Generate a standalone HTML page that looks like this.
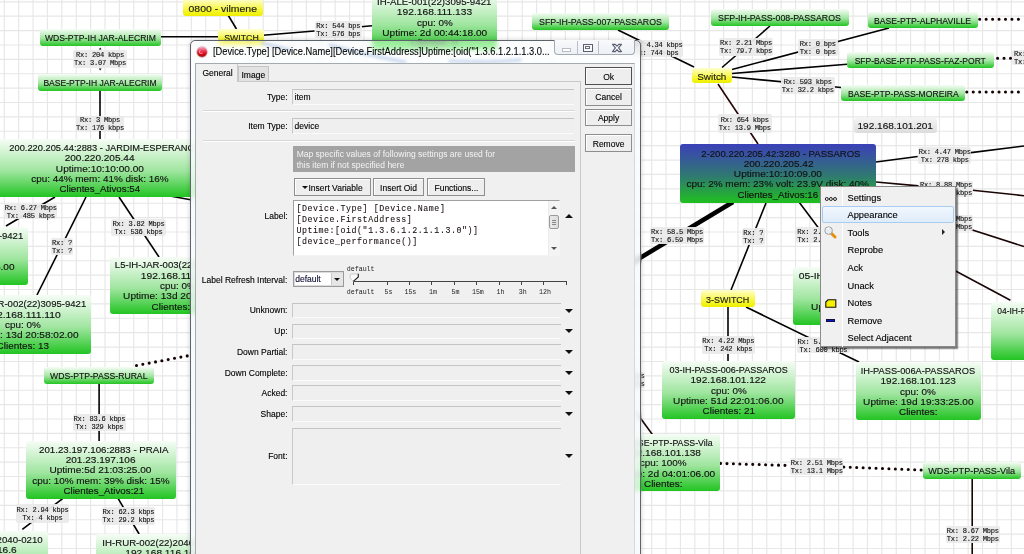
<!DOCTYPE html><html><head><meta charset="utf-8"><style>
*{margin:0;padding:0;box-sizing:border-box}
html,body{width:1024px;height:554px;overflow:hidden;background:#fff}
body{position:relative;font-family:"Liberation Sans",sans-serif}
.a{position:absolute}
.dev{will-change:transform;position:absolute;border-radius:3px;background:linear-gradient(#f6fdf6,#9fe59f 55%,#22c422);color:#111;font-size:9.4px;line-height:10.3px;text-align:center;white-space:nowrap;overflow:hidden}
.yel{will-change:transform;position:absolute;border-radius:3px;background:linear-gradient(#ffffd0,#f6f62a 70%,#eeee00);color:#222;font-size:9.4px;text-align:center;white-space:nowrap;overflow:hidden}
.ln{display:flex;justify-content:center;height:10.3px;white-space:nowrap}
.ln span{display:inline-block;transform-origin:50% 50%;-webkit-text-stroke:0.14px #111}
.lb{position:absolute;background:rgba(234,234,234,0.95);border-radius:2px;font-family:"Liberation Mono",monospace;font-size:7.1px;letter-spacing:-0.26px;line-height:8.0px;color:#111;white-space:pre;text-align:center;will-change:transform;-webkit-text-stroke:0.12px #111}
</style></head><body><svg class="a" style="left:0;top:0" width="1024" height="554" viewBox="0 0 1024 554"><path d="M4.30 0V554M18.69 0V554M33.07 0V554M47.46 0V554M61.84 0V554M76.23 0V554M90.62 0V554M105.00 0V554M119.39 0V554M133.77 0V554M148.16 0V554M162.55 0V554M176.93 0V554M191.32 0V554M205.70 0V554M220.09 0V554M234.48 0V554M248.86 0V554M263.25 0V554M277.63 0V554M292.02 0V554M306.41 0V554M320.79 0V554M335.18 0V554M349.56 0V554M363.95 0V554M378.34 0V554M392.72 0V554M407.11 0V554M421.49 0V554M435.88 0V554M450.27 0V554M464.65 0V554M479.04 0V554M493.42 0V554M507.81 0V554M522.20 0V554M536.58 0V554M550.97 0V554M565.35 0V554M579.74 0V554M594.13 0V554M608.51 0V554M622.90 0V554M637.28 0V554M651.67 0V554M666.06 0V554M680.44 0V554M694.83 0V554M709.21 0V554M723.60 0V554M737.99 0V554M752.37 0V554M766.76 0V554M781.14 0V554M795.53 0V554M809.92 0V554M824.30 0V554M838.69 0V554M853.07 0V554M867.46 0V554M881.85 0V554M896.23 0V554M910.62 0V554M925.00 0V554M939.39 0V554M953.78 0V554M968.16 0V554M982.55 0V554M996.93 0V554M1011.32 0V554M0 1.80H1024M0 16.19H1024M0 30.57H1024M0 44.96H1024M0 59.34H1024M0 73.73H1024M0 88.12H1024M0 102.50H1024M0 116.89H1024M0 131.27H1024M0 145.66H1024M0 160.05H1024M0 174.43H1024M0 188.82H1024M0 203.20H1024M0 217.59H1024M0 231.98H1024M0 246.36H1024M0 260.75H1024M0 275.13H1024M0 289.52H1024M0 303.91H1024M0 318.29H1024M0 332.68H1024M0 347.06H1024M0 361.45H1024M0 375.84H1024M0 390.22H1024M0 404.61H1024M0 418.99H1024M0 433.38H1024M0 447.77H1024M0 462.15H1024M0 476.54H1024M0 490.92H1024M0 505.31H1024M0 519.70H1024M0 534.08H1024M0 548.47H1024" stroke="#e7e7e7" stroke-width="1.15" fill="none"/><line x1="161" y1="36.8" x2="218" y2="36.8" stroke="#000" stroke-width="1.6"/><line x1="100" y1="91" x2="100" y2="139" stroke="#000" stroke-width="1.6"/><line x1="228" y1="15" x2="236.5" y2="29" stroke="#000" stroke-width="1.6"/><line x1="263" y1="35.2" x2="314.5" y2="31" stroke="#000" stroke-width="1.6"/><line x1="361" y1="26.8" x2="372" y2="25.8" stroke="#000" stroke-width="1.6"/><line x1="618" y1="30" x2="694" y2="67" stroke="#000" stroke-width="1.6"/><line x1="770" y1="26" x2="722" y2="67.5" stroke="#000" stroke-width="1.6"/><line x1="889" y1="28" x2="732" y2="69.5" stroke="#000" stroke-width="1.6"/><line x1="732" y1="73.5" x2="847" y2="64.2" stroke="#000" stroke-width="1.6"/><line x1="732" y1="77" x2="841" y2="87.5" stroke="#000" stroke-width="1.6"/><line x1="718" y1="84" x2="758" y2="144" stroke="#2a0505" stroke-width="1.6"/><line x1="876" y1="162" x2="917.7" y2="156.5" stroke="#000" stroke-width="1.6"/><line x1="971" y1="152.6" x2="1024" y2="146" stroke="#000" stroke-width="1.6"/><line x1="876" y1="182" x2="918.5" y2="185.9" stroke="#1a0505" stroke-width="1.6"/><line x1="972.6" y1="190.2" x2="1024" y2="195.7" stroke="#1a0505" stroke-width="1.6"/><line x1="876" y1="199" x2="1024" y2="246.6" stroke="#1a0505" stroke-width="1.6"/><line x1="850" y1="214.5" x2="1010.4" y2="300.3" stroke="#1a0505" stroke-width="1.6"/><line x1="746" y1="307" x2="859" y2="362" stroke="#000" stroke-width="1.6"/><line x1="766" y1="203" x2="731" y2="290" stroke="#000" stroke-width="1.6"/><line x1="799" y1="202" x2="847" y2="266" stroke="#000" stroke-width="1.6"/><line x1="733" y1="202" x2="630" y2="264" stroke="#000" stroke-width="4.5"/><line x1="728" y1="307" x2="728" y2="361.6" stroke="#000" stroke-width="1.6"/><line x1="972.2" y1="479" x2="972.2" y2="554" stroke="#1a0505" stroke-width="1.6"/><line x1="55" y1="197" x2="6" y2="226" stroke="#000" stroke-width="1.6"/><line x1="86" y1="197" x2="37" y2="295" stroke="#000" stroke-width="1.6"/><line x1="119" y1="197" x2="159" y2="257" stroke="#000" stroke-width="1.6"/><line x1="170" y1="196" x2="192" y2="200" stroke="#000" stroke-width="1.6"/><line x1="99.1" y1="384" x2="99.1" y2="441" stroke="#000" stroke-width="1.6"/><line x1="62.6" y1="498.7" x2="22.3" y2="529.3" stroke="#000" stroke-width="1.6"/><line x1="118.2" y1="498.7" x2="139.1" y2="534" stroke="#000" stroke-width="1.6"/><line x1="636" y1="412" x2="660" y2="445" stroke="#1a0505" stroke-width="1.6"/><line x1="979.7" y1="19.3" x2="1024" y2="19.3" stroke="#140404" stroke-width="3.1" stroke-linecap="round" stroke-dasharray="0 6.45"/><line x1="997.6" y1="58.3" x2="1012" y2="58.3" stroke="#140404" stroke-width="3.1" stroke-linecap="round" stroke-dasharray="0 6.45"/><line x1="966.8" y1="92" x2="1024" y2="92" stroke="#140404" stroke-width="3.1" stroke-linecap="round" stroke-dasharray="0 6.45"/><line x1="720.5" y1="463.4" x2="790" y2="465.5" stroke="#140404" stroke-width="3.1" stroke-linecap="round" stroke-dasharray="0 6.45"/><line x1="843.8" y1="467" x2="923" y2="470" stroke="#140404" stroke-width="3.1" stroke-linecap="round" stroke-dasharray="0 6.45"/><line x1="136.5" y1="365.5" x2="192" y2="355" stroke="#140404" stroke-width="3.1" stroke-linecap="round" stroke-dasharray="0 6.45"/><path d="M98.8 49.6 L100.2 47.6 L101.6 49.6 Z M98.8 68.6 L100.2 70.6 L101.6 68.6 Z" fill="#111"/></svg><div class="dev" style="left:40.0px;top:28.7px;width:121.0px;height:16.6px;"><div style="position:absolute;left:0;right:0;top:4.0px"><div class="ln"><span style="transform:translateX(0.00px) scaleX(0.919)">WDS-PTP-IH JAR-ALECRIM</span></div></div></div><div class="dev" style="left:37.7px;top:74.0px;width:124.3px;height:17.0px;"><div style="position:absolute;left:0;right:0;top:4.2px"><div class="ln"><span style="transform:translateX(0.00px) scaleX(0.913)">BASE-PTP-IH JAR-ALECRIM</span></div></div></div><div class="dev" style="left:531.7px;top:13.1px;width:137.3px;height:17.1px;"><div style="position:absolute;left:0;right:0;top:4.2px"><div class="ln"><span style="transform:translateX(0.00px) scaleX(0.938)">SFP-IH-PASS-007-PASSAROS</span></div></div></div><div class="dev" style="left:711.2px;top:9.4px;width:137.7px;height:16.8px;"><div style="position:absolute;left:0;right:0;top:4.1px"><div class="ln"><span style="transform:translateX(0.00px) scaleX(0.938)">SFP-IH-PASS-008-PASSAROS</span></div></div></div><div class="dev" style="left:867.6px;top:11.8px;width:110.0px;height:16.0px;"><div style="position:absolute;left:0;right:0;top:3.7px"><div class="ln"><span style="transform:translateX(0.00px) scaleX(0.925)">BASE-PTP-ALPHAVILLE</span></div></div></div><div class="dev" style="left:847.3px;top:52.3px;width:146.9px;height:16.3px;"><div style="position:absolute;left:0;right:0;top:3.8px"><div class="ln"><span style="transform:translateX(0.00px) scaleX(0.908)">SFP-BASE-PTP-PASS-FAZ-PORT</span></div></div></div><div class="dev" style="left:841.4px;top:84.8px;width:124.1px;height:16.2px;"><div style="position:absolute;left:0;right:0;top:3.8px"><div class="ln"><span style="transform:translateX(0.00px) scaleX(0.918)">BASE-PTP-PASS-MOREIRA</span></div></div></div><div class="dev" style="left:44.2px;top:367.2px;width:109.5px;height:16.5px;"><div style="position:absolute;left:0;right:0;top:3.9px"><div class="ln"><span style="transform:translateX(0.00px) scaleX(0.922)">WDS-PTP-PASS-RURAL</span></div></div></div><div class="dev" style="left:923.2px;top:462.1px;width:97.7px;height:16.5px;"><div style="position:absolute;left:0;right:0;top:3.9px"><div class="ln"><span style="transform:translateX(0.00px) scaleX(0.972)">WDS-PTP-PASS-Vila</span></div></div></div><div class="yel" style="left:183.2px;top:-1.0px;width:79.8px;height:17.1px;"><div style="position:absolute;left:0;right:0;top:3.7px"><div class="ln"><span style="transform:translateX(0.00px) scaleX(1.113)">0800 - vilmene</span></div></div></div><div class="yel" style="left:217.6px;top:28.6px;width:46.1px;height:15.8px;"><div style="position:absolute;left:0;right:0;top:3.0px"><div class="ln"><span style="transform:translateX(0.00px) scaleX(0.931)">SWITCH</span></div></div></div><div class="yel" style="left:692.3px;top:68.4px;width:40.0px;height:15.4px;"><div style="position:absolute;left:0;right:0;top:2.8px"><div class="ln"><span style="transform:translateX(0.00px) scaleX(1.051)">Switch</span></div></div></div><div class="yel" style="left:701.2px;top:290.1px;width:54.1px;height:16.8px;"><div style="position:absolute;left:0;right:0;top:3.5px"><div class="ln"><span style="transform:translateX(0.00px) scaleX(0.953)">3-SWITCH</span></div></div></div><div class="dev" style="left:853.7px;top:118.0px;width:83.3px;height:15.1px;background:linear-gradient(#f4f4f4,#dcdcdc);"><div style="position:absolute;left:0;right:0;top:3.2px"><div class="ln"><span style="transform:translateX(0.00px) scaleX(1.071)">192.168.101.201</span></div></div></div><div class="dev" style="left:371.7px;top:-6.6px;width:124.9px;height:58.0px;"><div style="position:absolute;left:0;right:0;top:4.1px"><div class="ln"><span style="transform:translateX(0.00px) scaleX(1.035)">IH-ALE-001(22)3095-9421</span></div><div class="ln"><span style="transform:translateX(0.00px) scaleX(1.093)">192.168.111.133</span></div><div class="ln"><span style="transform:translateX(0.00px) scaleX(1.052)">cpu: 0%</span></div><div class="ln"><span style="transform:translateX(0.00px) scaleX(1.076)">Uptime: 2d 00:44:18.00</span></div><div class="ln"><span style="transform:translateX(0.00px) scaleX(1.055)">Clientes: 0</span></div></div></div><div class="dev" style="left:-5.0px;top:139.2px;width:210.0px;height:58.1px;"><div style="position:absolute;left:0;right:0;top:4.2px"><div class="ln"><span style="transform:translateX(1.50px) scaleX(0.991)">200.220.205.44:2883 - JARDIM-ESPERANC</span></div><div class="ln"><span style="transform:translateX(0.00px) scaleX(1.071)">200.220.205.44</span></div><div class="ln"><span style="transform:translateX(0.00px) scaleX(1.077)">Uptime:10:10:00.00</span></div><div class="ln"><span style="transform:translateX(0.00px) scaleX(1.059)">cpu: 44% mem: 41% disk: 16%</span></div><div class="ln"><span style="transform:translateX(0.00px) scaleX(1.040)">Clientes_Ativos:54</span></div></div></div><div class="dev" style="left:-108.7px;top:227.0px;width:137.2px;height:57.8px;"><div style="position:absolute;left:0;right:0;top:4.0px"><div class="ln"><span style="transform:translateX(0.00px) scaleX(1.019)">L5-IH-JAR-001(22)3095-9421</span></div><div class="ln"><span style="transform:translateX(0.00px) scaleX(1.000)"></span></div><div class="ln"><span style="transform:translateX(0.00px) scaleX(1.000)"></span></div><div class="ln"><span style="transform:translateX(0.00px) scaleX(1.076)">Uptime: 13d 20:58:05.00</span></div><div class="ln"><span style="transform:translateX(0.00px) scaleX(1.000)"></span></div></div></div><div class="dev" style="left:-44.0px;top:295.2px;width:134.5px;height:58.6px;"><div style="position:absolute;left:0;right:0;top:4.4px"><div class="ln"><span style="transform:translateX(0.00px) scaleX(1.019)">L5-IH-JAR-002(22)3095-9421</span></div><div class="ln"><span style="transform:translateX(0.00px) scaleX(1.104)">192.168.111.110</span></div><div class="ln"><span style="transform:translateX(0.00px) scaleX(1.052)">cpu: 0%</span></div><div class="ln"><span style="transform:translateX(0.00px) scaleX(1.076)">Uptime: 13d 20:58:02.00</span></div><div class="ln"><span style="transform:translateX(0.00px) scaleX(1.056)">Clientes: 13</span></div></div></div><div class="dev" style="left:109.8px;top:257.0px;width:136.4px;height:56.6px;"><div style="position:absolute;left:0;right:0;top:3.4px"><div class="ln"><span style="transform:translateX(0.00px) scaleX(1.019)">L5-IH-JAR-003(22)3095-9421</span></div><div class="ln"><span style="transform:translateX(0.00px) scaleX(1.093)">192.168.111.120</span></div><div class="ln"><span style="transform:translateX(0.00px) scaleX(1.052)">cpu: 0%</span></div><div class="ln"><span style="transform:translateX(0.00px) scaleX(1.076)">Uptime: 13d 20:58:02.00</span></div><div class="ln"><span style="transform:translateX(0.00px) scaleX(1.056)">Clientes: 13</span></div></div></div><div class="dev" style="left:25.8px;top:441.2px;width:149.7px;height:57.5px;"><div style="position:absolute;left:0;right:0;top:3.9px"><div class="ln"><span style="transform:translateX(3.20px) scaleX(1.035)">201.23.197.106:2883 - PRAIA</span></div><div class="ln"><span style="transform:translateX(0.00px) scaleX(1.071)">201.23.197.106</span></div><div class="ln"><span style="transform:translateX(0.00px) scaleX(1.076)">Uptime:5d 21:03:25.00</span></div><div class="ln"><span style="transform:translateX(0.00px) scaleX(1.059)">cpu: 10% mem: 39% disk: 15%</span></div><div class="ln"><span style="transform:translateX(3.00px) scaleX(1.040)">Clientes_Ativos:21</span></div></div></div><div class="dev" style="left:-79.5px;top:530.7px;width:126.8px;height:57.7px;"><div style="position:absolute;left:0;right:0;top:3.9px"><div class="ln"><span style="transform:translateX(0.00px) scaleX(1.029)">IH-RUR-001(22)2040-0210</span></div><div class="ln"><span style="transform:translateX(0.00px) scaleX(1.084)">192.168.116.6</span></div><div class="ln"><span style="transform:translateX(0.00px) scaleX(1.052)">cpu: 0%</span></div><div class="ln"><span style="transform:translateX(0.00px) scaleX(1.075)">Uptime: 1d</span></div><div class="ln"><span style="transform:translateX(0.00px) scaleX(1.055)">Clientes: 0</span></div></div></div><div class="dev" style="left:96.0px;top:534.0px;width:129.0px;height:57.7px;"><div style="position:absolute;left:0;right:0;top:4.0px"><div class="ln"><span style="transform:translateX(0.00px) scaleX(1.029)">IH-RUR-002(22)2040-0210</span></div><div class="ln"><span style="transform:translateX(0.00px) scaleX(1.083)">192.168.116.10</span></div><div class="ln"><span style="transform:translateX(0.00px) scaleX(1.052)">cpu: 0%</span></div><div class="ln"><span style="transform:translateX(0.00px) scaleX(1.075)">Uptime: 1d</span></div><div class="ln"><span style="transform:translateX(0.00px) scaleX(1.055)">Clientes: 0</span></div></div></div><div class="dev" style="left:679.6px;top:144.2px;width:196.2px;height:58.7px;background:linear-gradient(#3b40b8,#2f7a70 55%,#20c020);"><div style="position:absolute;left:0;right:0;top:4.5px"><div class="ln"><span style="transform:translateX(2.80px) scaleX(1.019)">2-200.220.205.42:3280 - PASSAROS</span></div><div class="ln"><span style="transform:translateX(0.00px) scaleX(1.071)">200.220.205.42</span></div><div class="ln"><span style="transform:translateX(0.00px) scaleX(1.077)">Uptime:10:10:09.00</span></div><div class="ln"><span style="transform:translateX(0.00px) scaleX(1.064)">cpu: 2% mem: 23% volt: 23.9V disk: 40%</span></div><div class="ln"><span style="transform:translateX(0.00px) scaleX(1.040)">Clientes_Ativos:16</span></div></div></div><div class="dev" style="left:793.2px;top:266.6px;width:147.0px;height:57.9px;"><div style="position:absolute;left:0;right:0;top:4.0px"><div class="ln"><span style="transform:translateX(0.00px) scaleX(1.102)">05-IH-PASS-005-PASSAROS</span></div><div class="ln"><span style="transform:translateX(0.00px) scaleX(1.071)">192.168.101.125</span></div><div class="ln"><span style="transform:translateX(0.00px) scaleX(1.052)">cpu: 0%</span></div><div class="ln"><span style="transform:translateX(0.00px) scaleX(1.076)">Uptime: 19d 19:33:25.00</span></div><div class="ln"><span style="transform:translateX(0.00px) scaleX(1.051)">Clientes:</span></div></div></div><div class="dev" style="left:661.8px;top:361.0px;width:132.9px;height:58.0px;"><div style="position:absolute;left:0;right:0;top:4.1px"><div class="ln"><span style="transform:translateX(0.00px) scaleX(0.961)">03-IH-PASS-006-PASSAROS</span></div><div class="ln"><span style="transform:translateX(0.00px) scaleX(1.071)">192.168.101.122</span></div><div class="ln"><span style="transform:translateX(0.00px) scaleX(1.052)">cpu: 0%</span></div><div class="ln"><span style="transform:translateX(0.00px) scaleX(1.076)">Uptime: 51d 22:01:06.00</span></div><div class="ln"><span style="transform:translateX(0.00px) scaleX(1.056)">Clientes: 21</span></div></div></div><div class="dev" style="left:605.7px;top:433.5px;width:114.4px;height:57.3px;"><div style="position:absolute;left:0;right:0;top:3.8px"><div class="ln"><span style="transform:translateX(0.00px) scaleX(0.936)">L5-BASE-PTP-PASS-Vila</span></div><div class="ln"><span style="transform:translateX(0.00px) scaleX(1.071)">192.168.101.138</span></div><div class="ln"><span style="transform:translateX(0.00px) scaleX(1.056)">cpu: 100%</span></div><div class="ln"><span style="transform:translateX(0.00px) scaleX(1.076)">Uptime: 2d 04:01:06.00</span></div><div class="ln"><span style="transform:translateX(0.00px) scaleX(1.051)">Clientes:</span></div></div></div><div class="dev" style="left:990.8px;top:301.8px;width:182.0px;height:58.2px;"><div style="position:absolute;left:0;right:0;top:4.2px"><div class="ln"><span style="transform:translateX(0.00px) scaleX(0.901)">04-IH-PASS-004-PASSAROS-CONDOMINIO</span></div><div class="ln"><span style="transform:translateX(0.00px) scaleX(1.071)">192.168.101.124</span></div><div class="ln"><span style="transform:translateX(0.00px) scaleX(1.052)">cpu: 0%</span></div><div class="ln"><span style="transform:translateX(0.00px) scaleX(1.076)">Uptime: 19d 19:33:25.00</span></div><div class="ln"><span style="transform:translateX(0.00px) scaleX(1.051)">Clientes:</span></div></div></div><div class="dev" style="left:856.0px;top:362.4px;width:124.7px;height:57.7px;"><div style="position:absolute;left:0;right:0;top:4.0px"><div class="ln"><span style="transform:translateX(0.00px) scaleX(0.987)">IH-PASS-006A-PASSAROS</span></div><div class="ln"><span style="transform:translateX(0.00px) scaleX(1.071)">192.168.101.123</span></div><div class="ln"><span style="transform:translateX(0.00px) scaleX(1.052)">cpu: 0%</span></div><div class="ln"><span style="transform:translateX(0.00px) scaleX(1.076)">Uptime: 19d 19:33:25.00</span></div><div class="ln"><span style="transform:translateX(0.00px) scaleX(1.051)">Clientes:</span></div></div></div><div class="lb" style="left:73.0px;top:50.0px;width:54.0px;height:18.0px;padding-top:1.4px">Rx: 204 kbps
Tx: 3.07 Mbps</div><div class="lb" style="left:75.9px;top:116.4px;width:48.0px;height:15.2px;padding-top:-0.0px">Rx: 3 Mbps
Tx: 176 kbps</div><div class="lb" style="left:314.5px;top:20.6px;width:46.5px;height:16.9px;padding-top:0.8px">Rx: 544 bps
Tx: 576 bps</div><div class="lb" style="left:630.0px;top:40.0px;width:53.0px;height:16.6px;padding-top:0.7px">Rx: 4.34 kbps
Tx: 744 bps</div><div class="lb" style="left:718.8px;top:37.7px;width:54.2px;height:17.9px;padding-top:1.3px">Rx: 2.21 Mbps
Tx: 79.7 kbps</div><div class="lb" style="left:797.5px;top:39.4px;width:39.5px;height:16.8px;padding-top:0.8px">Rx: 0 bps
Tx: 0 bps</div><div class="lb" style="left:1011.9px;top:50.4px;width:40.1px;height:15.0px;padding-top:-0.1px">Rx: 0 bps
Tx: 0 bps</div><div class="lb" style="left:780.6px;top:76.6px;width:53.7px;height:16.6px;padding-top:0.7px">Rx: 593 kbps
Tx: 32.2 kbps</div><div class="lb" style="left:718.2px;top:114.4px;width:53.7px;height:18.5px;padding-top:1.6px">Rx: 654 kbps
Tx: 13.9 Mbps</div><div class="lb" style="left:917.7px;top:147.4px;width:53.4px;height:16.5px;padding-top:0.7px">Rx: 4.47 Mbps
Tx: 278 kbps</div><div class="lb" style="left:918.5px;top:180.7px;width:54.1px;height:15.9px;padding-top:0.4px">Rx: 8.88 Mbps
Tx: 8.88 kbps</div><div class="lb" style="left:918.5px;top:215.3px;width:54.1px;height:15.9px;padding-top:0.3px">Rx: 1.22 Mbps
Tx: 3.22 Mbps</div><div class="lb" style="left:650.3px;top:227.0px;width:54.1px;height:17.1px;padding-top:0.9px">Rx: 58.5 Mbps
Tx: 6.59 Mbps</div><div class="lb" style="left:741.8px;top:227.9px;width:22.7px;height:17.1px;padding-top:0.9px">Rx: ?
Tx: ?</div><div class="lb" style="left:795.6px;top:226.5px;width:54.4px;height:16.3px;padding-top:0.6px">Rx: 2.41 Mbps
Tx: 2.41 Mbps</div><div class="lb" style="left:701.5px;top:335.5px;width:52.7px;height:17.5px;padding-top:1.1px">Rx: 4.22 Mbps
Tx: 242 kbps</div><div class="lb" style="left:797.2px;top:336.7px;width:52.8px;height:16.3px;padding-top:0.6px">Rx: 5.42 Mbps
Tx: 600 kbps</div><div class="lb" style="left:790.4px;top:458.2px;width:53.4px;height:16.5px;padding-top:0.7px">Rx: 2.51 Mbps
Tx: 13.1 Mbps</div><div class="lb" style="left:945.6px;top:525.7px;width:53.6px;height:16.8px;padding-top:0.8px">Rx: 8.67 Mbps
Tx: 2.22 Mbps</div><div class="lb" style="left:4.0px;top:204.4px;width:53.4px;height:15.4px;padding-top:0.1px">Rx: 6.27 Mbps
Tx: 485 kbps</div><div class="lb" style="left:51.0px;top:237.8px;width:22.1px;height:17.2px;padding-top:1.0px">Rx: ?
Tx: ?</div><div class="lb" style="left:111.2px;top:218.8px;width:55.0px;height:16.8px;padding-top:0.8px">Rx: 3.82 Mbps
Tx: 536 kbps</div><div class="lb" style="left:72.9px;top:413.9px;width:52.8px;height:17.3px;padding-top:1.1px">Rx: 83.6 kbps
Tx: 329 kbps</div><div class="lb" style="left:15.9px;top:504.4px;width:53.1px;height:19.0px;padding-top:1.9px">Rx: 2.94 kbps
Tx: 4 kbps</div><div class="lb" style="left:102.4px;top:506.6px;width:52.8px;height:17.8px;padding-top:1.3px">Rx: 62.3 kbps
Tx: 29.2 kbps</div><div class="lb" style="left:596.0px;top:372.0px;width:49.0px;height:16.0px;padding-top:0.4px">Rx: 1.2 kbps
Tx: 2.1 kbps</div><div class="a" style="left:189.6px;top:40.3px;width:451.9px;height:520.0px;border:1px solid #5d636b;border-radius:5px 5px 0 0;background:linear-gradient(180deg,rgba(250,252,253,0.5),rgba(252,253,254,0.8) 12px,rgba(252,253,254,0.88) 22px,rgba(248,251,252,0.84) 60px,rgba(246,250,251,0.82));-webkit-backdrop-filter:blur(2.5px) saturate(1.4);backdrop-filter:blur(2.5px) saturate(1.4);box-shadow:0 0 5px rgba(0,0,0,0.2)"></div><svg class="a" style="left:190px;top:41px" width="450" height="22" viewBox="0 0 450 22"><defs><filter id="bl" x="-20%" y="-50%" width="140%" height="200%"><feGaussianBlur stdDeviation="1.6"/></filter></defs><g filter="url(#bl)" stroke="rgba(120,160,215,0.45)" stroke-width="2.6" fill="none" stroke-linecap="round"><path d="M72 2 L100 9"/><path d="M140 4 Q175 14 215 21"/><path d="M260 20 Q300 22 330 19"/></g></svg><div class="a" style="left:196.9px;top:46.9px;width:10.0px;height:10.0px;border-radius:50%;background:linear-gradient(#f6a8c0,#ec3a5a 40%,#e0081a 65%,#9a1008);box-shadow:0 0 1px 0.5px rgba(60,0,0,0.45)"><div class="a" style="left:2.6px;top:3.4px;width:4px;height:4px;border-radius:50%;border-left:1px solid rgba(255,220,220,0.7);border-bottom:1px solid rgba(255,220,220,0.7)"></div></div><div class="a" style="left:213.0px;top:45.6px;white-space:nowrap;font-size:10px;line-height:12px;color:#000;transform:scaleX(0.93);transform-origin:0 0;-webkit-text-stroke:0.1px #000">[Device.Type] [Device.Name][Device.FirstAddress]Uptime:[oid(&quot;1.3.6.1.2.1.1.3.0...</div><div class="a" style="left:554.4px;top:40.2px;width:81.1px;height:15.1px;border:1px solid #a3abb4;border-top:none;border-radius:0 0 4px 4px;background:linear-gradient(#f8fafc,#edf1f5)"></div><div class="a" style="left:576.6px;top:40.5px;width:1.0px;height:14.6px;background:#b8bfc7"></div><div class="a" style="left:598.4px;top:40.5px;width:1.0px;height:14.6px;background:#b8bfc7"></div><div class="a" style="left:561.5px;top:48.2px;width:9.0px;height:3.4px;border:1px solid #b8bcc4;background:#fff"></div><div class="a" style="left:582.6px;top:43.8px;width:10.4px;height:8.2px;border:1.7px solid #5c6070;background:#f8f9fb"><div class="a" style="left:1px;top:0.9px;width:5px;height:3.2px;border:1px solid #6a6e7c"></div></div><svg class="a" style="left:611px;top:43px" width="12" height="10" viewBox="0 0 12 10"><path d="M1.5 1.3 L4.3 1.3 L6 3.1 L7.7 1.3 L10.5 1.3 L7.6 4.9 L10.5 8.6 L7.7 8.6 L6 6.7 L4.3 8.6 L1.5 8.6 L4.4 4.9 Z" fill="#f3f4f7" stroke="#5d6172" stroke-width="1.15" stroke-linejoin="round"/></svg><div class="a" style="left:195.3px;top:63.3px;width:440.2px;height:500.0px;background:#f0f0f0;border-top:1px solid #a5aaaf;border-left:1px solid #a5aaaf;border-right:1px solid #d5d9dd"></div><div class="a" style="left:237.5px;top:66.0px;width:31.7px;height:15.5px;background:#e2e2e2;border:1px solid #c5c5c5;border-bottom:none"></div><div class="a" style="left:196.3px;top:64.2px;width:41.5px;height:17.5px;background:#f0f0f0;border-right:1px solid #c9c9c9"></div><div class="a" style="left:202.5px;top:68.4px;white-space:nowrap;font-size:8.5px;line-height:11px;color:#000;-webkit-text-stroke:0.12px #000">General</div><div class="a" style="left:241.5px;top:69.9px;white-space:nowrap;font-size:8.5px;line-height:11px;color:#000;-webkit-text-stroke:0.12px #000">Image</div><div class="a" style="left:237.5px;top:81.2px;width:343.5px;height:1.0px;background:#c9c9c9"></div><div class="a" style="left:580.3px;top:81.2px;width:1.0px;height:480.0px;background:#c9c9c9"></div><div class="a" style="left:167.7px;top:91.6px;width:120.0px;text-align:right;white-space:nowrap;font-size:8.5px;line-height:11px;color:#000;-webkit-text-stroke:0.12px #000">Type:</div><div class="a" style="left:292.4px;top:89.3px;width:282.1px;height:15.4px;background:#efefef;border-top:1.2px solid #c4c4c4;border-left:1.2px solid #c8c8c8;border-bottom:1px solid #fbfbfb"></div><div class="a" style="left:294.6px;top:91.7px;white-space:nowrap;font-size:8.5px;line-height:11px;color:#000;-webkit-text-stroke:0.12px #000">item</div><div class="a" style="left:203.0px;top:110.3px;width:371.5px;height:1.0px;background:#d7d7d7;border-bottom:1px solid #fff;height:2px"></div><div class="a" style="left:167.7px;top:120.7px;width:120.0px;text-align:right;white-space:nowrap;font-size:8.5px;line-height:11px;color:#000;-webkit-text-stroke:0.12px #000">Item Type:</div><div class="a" style="left:292.4px;top:118.0px;width:282.1px;height:15.5px;background:#efefef;border-top:1.2px solid #c4c4c4;border-left:1.2px solid #c8c8c8;border-bottom:1px solid #fbfbfb"></div><div class="a" style="left:294.6px;top:120.5px;white-space:nowrap;font-size:8.5px;line-height:11px;color:#000;-webkit-text-stroke:0.12px #000">device</div><div class="a" style="left:203.0px;top:139.6px;width:371.5px;height:2.0px;background:#d7d7d7;border-bottom:1px solid #fff"></div><div class="a" style="left:292.9px;top:146.3px;width:281.7px;height:25.5px;background:#a3a3a3"></div><div class="a" style="left:296.7px;top:149.2px;white-space:nowrap;font-size:8.5px;line-height:10.2px;color:#f4f4f4">Map specific values of following settings are used for</div><div class="a" style="left:296.7px;top:160.2px;white-space:nowrap;font-size:8.5px;line-height:10.2px;color:#f4f4f4">this item if not specified here</div><div class="a" style="left:294.4px;top:178.2px;width:76.4px;height:18.0px;border:1px solid #8e8e8e;background:#eeeeee;box-shadow:inset 1px 1px 0 #fff"></div><div class="a" style="left:308.5px;top:183.0px;white-space:nowrap;font-size:8.5px;line-height:11px;color:#000;-webkit-text-stroke:0.12px #000">Insert Variable</div><div class="a" style="left:301.5px;top:186px;width:0;height:0;border-left:3.2px solid transparent;border-right:3.2px solid transparent;border-top:3.6px solid #111"></div><div class="a" style="left:373.0px;top:178.2px;width:51.1px;height:18.0px;border:1px solid #8e8e8e;background:#eeeeee;box-shadow:inset 1px 1px 0 #fff"></div><div class="a" style="left:373.0px;top:182.6px;width:51.1px;text-align:center;white-space:nowrap;font-size:8.5px;line-height:11px;color:#000;-webkit-text-stroke:0.12px #000">Insert Oid</div><div class="a" style="left:427.4px;top:178.2px;width:58.1px;height:18.0px;border:1px solid #8e8e8e;background:#eeeeee;box-shadow:inset 1px 1px 0 #fff"></div><div class="a" style="left:427.4px;top:182.6px;width:58.1px;text-align:center;white-space:nowrap;font-size:8.5px;line-height:11px;color:#000;-webkit-text-stroke:0.12px #000">Functions...</div><div class="a" style="left:167.7px;top:211.2px;width:120.0px;text-align:right;white-space:nowrap;font-size:8.5px;line-height:11px;color:#000;-webkit-text-stroke:0.12px #000">Label:</div><div class="a" style="left:292.9px;top:199.6px;width:267.6px;height:56.0px;background:#fff;border-top:1.4px solid #a0a0a0;border-left:1.4px solid #a0a0a0;border-right:1px solid #e8e8e8;border-bottom:1px solid #f4f4f4"></div><div class="a" style="left:296.4px;top:202.8px;white-space:pre;font-family:'Liberation Mono',monospace;font-size:8.3px;letter-spacing:0.54px;line-height:11.2px;color:#1a1010;-webkit-text-stroke:0.08px #1a1010">[Device.Type] [Device.Name]
[Device.FirstAddress]
Uptime:[oid("1.3.6.1.2.1.1.3.0")]
[device_performance()]</div><div class="a" style="left:548.0px;top:201.0px;width:12.0px;height:54.0px;background:#f4f4f4;border-left:1px solid #ececec"></div><div class="a" style="left:551px;top:206px;width:0;height:0;border-left:3px solid transparent;border-right:3px solid transparent;border-bottom:3px solid #555"></div><div class="a" style="left:551px;top:246.5px;width:0;height:0;border-left:3px solid transparent;border-right:3px solid transparent;border-top:3px solid #555"></div><div class="a" style="left:548.6px;top:215.0px;width:10.5px;height:13.6px;border:1px solid #9a9a9a;border-radius:2px;background:linear-gradient(90deg,#eaeaea,#dcdcdc)"><div class="a" style="left:2.5px;top:3.5px;width:4px;height:5px;border-top:1px solid #888;border-bottom:1px solid #888"></div><div class="a" style="left:2.5px;top:5.5px;width:4px;height:1px;background:#888"></div></div><div class="a" style="left:564.6px;top:213.6px;width:0;height:0;border-left:4.2px solid transparent;border-right:4.2px solid transparent;border-bottom:4.4px solid #111"></div><div class="a" style="left:167.3px;top:274.7px;width:120.0px;text-align:right;white-space:nowrap;font-size:8.5px;line-height:11px;color:#000;-webkit-text-stroke:0.12px #000">Label Refresh Interval:</div><div class="a" style="left:292.5px;top:271.3px;width:51.9px;height:15.3px;background:#fff;border:1px solid #9a9a9a;box-shadow:inset 0 0 0 1px #dcdcdc"></div><div class="a" style="left:295.2px;top:274.0px;white-space:nowrap;font-size:8.5px;line-height:11px;color:#0a0a30;-webkit-text-stroke:0.1px #0a0a30">default</div><div class="a" style="left:331.0px;top:273.0px;width:11.8px;height:11.9px;background:#e6e6e6;border-left:1px solid #c8c8c8"></div><div class="a" style="left:334px;top:278px;width:0;height:0;border-left:3.8px solid transparent;border-right:3.8px solid transparent;border-top:3.8px solid #111"></div><div class="a" style="left:346.7px;top:264.5px;white-space:nowrap;font-family:'Liberation Mono',monospace;font-size:6.65px;line-height:8px;color:#222;white-space:nowrap">default</div><div class="a" style="left:353.3px;top:280.6px;width:213.3px;height:1.1px;background:#444"></div><div class="a" style="left:352.8px;top:281.0px;width:1.1px;height:4.0px;background:#444"></div><div class="a" style="left:346.7px;top:288.4px;white-space:nowrap;font-family:'Liberation Mono',monospace;font-size:6.65px;line-height:8px;color:#222;white-space:nowrap">default</div><div class="a" style="left:386.8px;top:281.0px;width:1.1px;height:4.0px;background:#444"></div><div class="a" style="left:384.5px;top:288.4px;white-space:nowrap;font-family:'Liberation Mono',monospace;font-size:6.65px;line-height:8px;color:#222;white-space:nowrap">5s</div><div class="a" style="left:408.7px;top:281.0px;width:1.1px;height:4.0px;background:#444"></div><div class="a" style="left:404.4px;top:288.4px;white-space:nowrap;font-family:'Liberation Mono',monospace;font-size:6.65px;line-height:8px;color:#222;white-space:nowrap">15s</div><div class="a" style="left:431.4px;top:281.0px;width:1.1px;height:4.0px;background:#444"></div><div class="a" style="left:429.1px;top:288.4px;white-space:nowrap;font-family:'Liberation Mono',monospace;font-size:6.65px;line-height:8px;color:#222;white-space:nowrap">1m</div><div class="a" style="left:453.9px;top:281.0px;width:1.1px;height:4.0px;background:#444"></div><div class="a" style="left:451.6px;top:288.4px;white-space:nowrap;font-family:'Liberation Mono',monospace;font-size:6.65px;line-height:8px;color:#222;white-space:nowrap">5m</div><div class="a" style="left:476.2px;top:281.0px;width:1.1px;height:4.0px;background:#444"></div><div class="a" style="left:471.9px;top:288.4px;white-space:nowrap;font-family:'Liberation Mono',monospace;font-size:6.65px;line-height:8px;color:#222;white-space:nowrap">15m</div><div class="a" style="left:498.7px;top:281.0px;width:1.1px;height:4.0px;background:#444"></div><div class="a" style="left:496.4px;top:288.4px;white-space:nowrap;font-family:'Liberation Mono',monospace;font-size:6.65px;line-height:8px;color:#222;white-space:nowrap">1h</div><div class="a" style="left:521.0px;top:281.0px;width:1.1px;height:4.0px;background:#444"></div><div class="a" style="left:518.7px;top:288.4px;white-space:nowrap;font-family:'Liberation Mono',monospace;font-size:6.65px;line-height:8px;color:#222;white-space:nowrap">3h</div><div class="a" style="left:543.3px;top:281.0px;width:1.1px;height:4.0px;background:#444"></div><div class="a" style="left:539.0px;top:288.4px;white-space:nowrap;font-family:'Liberation Mono',monospace;font-size:6.65px;line-height:8px;color:#222;white-space:nowrap">12h</div><div class="a" style="left:566.1px;top:281.0px;width:1.1px;height:4.0px;background:#444"></div><svg class="a" style="left:348px;top:272px" width="12" height="11" viewBox="0 0 12 11"><path d="M2.2 3.2 Q2.2 2 3.4 2 L10.3 2 L10.3 5.2 L5.4 9.6 L2.2 6.2 Z" stroke="#b8b8b8" stroke-width="0.7" fill="#fbfbfb"/><path d="M5.3 9.4 L10.3 5 L10.3 1.8" stroke="#222" stroke-width="1.1" fill="none"/></svg><div class="a" style="left:167.5px;top:305.3px;width:120.0px;text-align:right;white-space:nowrap;font-size:8.5px;line-height:11px;color:#000;-webkit-text-stroke:0.12px #000">Unknown:</div><div class="a" style="left:292.4px;top:302.8px;width:269.0px;height:15.2px;background:#efefef;border-top:1.2px solid #c4c4c4;border-left:1.2px solid #c8c8c8;border-bottom:1px solid #fbfbfb"></div><div class="a" style="left:564.5px;top:308.6px;width:0;height:0;border-left:4px solid transparent;border-right:4px solid transparent;border-top:4.2px solid #111"></div><div class="a" style="left:167.5px;top:326.0px;width:120.0px;text-align:right;white-space:nowrap;font-size:8.5px;line-height:11px;color:#000;-webkit-text-stroke:0.12px #000">Up:</div><div class="a" style="left:292.4px;top:323.5px;width:269.0px;height:15.2px;background:#efefef;border-top:1.2px solid #c4c4c4;border-left:1.2px solid #c8c8c8;border-bottom:1px solid #fbfbfb"></div><div class="a" style="left:564.5px;top:329.3px;width:0;height:0;border-left:4px solid transparent;border-right:4px solid transparent;border-top:4.2px solid #111"></div><div class="a" style="left:167.5px;top:347.0px;width:120.0px;text-align:right;white-space:nowrap;font-size:8.5px;line-height:11px;color:#000;-webkit-text-stroke:0.12px #000">Down Partial:</div><div class="a" style="left:292.4px;top:344.4px;width:269.0px;height:15.5px;background:#efefef;border-top:1.2px solid #c4c4c4;border-left:1.2px solid #c8c8c8;border-bottom:1px solid #fbfbfb"></div><div class="a" style="left:564.5px;top:350.3px;width:0;height:0;border-left:4px solid transparent;border-right:4px solid transparent;border-top:4.2px solid #111"></div><div class="a" style="left:167.5px;top:367.6px;width:120.0px;text-align:right;white-space:nowrap;font-size:8.5px;line-height:11px;color:#000;-webkit-text-stroke:0.12px #000">Down Complete:</div><div class="a" style="left:292.4px;top:365.0px;width:269.0px;height:15.5px;background:#efefef;border-top:1.2px solid #c4c4c4;border-left:1.2px solid #c8c8c8;border-bottom:1px solid #fbfbfb"></div><div class="a" style="left:564.5px;top:370.9px;width:0;height:0;border-left:4px solid transparent;border-right:4px solid transparent;border-top:4.2px solid #111"></div><div class="a" style="left:167.5px;top:387.8px;width:120.0px;text-align:right;white-space:nowrap;font-size:8.5px;line-height:11px;color:#000;-webkit-text-stroke:0.12px #000">Acked:</div><div class="a" style="left:292.4px;top:385.0px;width:269.0px;height:15.9px;background:#efefef;border-top:1.2px solid #c4c4c4;border-left:1.2px solid #c8c8c8;border-bottom:1px solid #fbfbfb"></div><div class="a" style="left:564.5px;top:391.1px;width:0;height:0;border-left:4px solid transparent;border-right:4px solid transparent;border-top:4.2px solid #111"></div><div class="a" style="left:167.5px;top:409.1px;width:120.0px;text-align:right;white-space:nowrap;font-size:8.5px;line-height:11px;color:#000;-webkit-text-stroke:0.12px #000">Shape:</div><div class="a" style="left:292.4px;top:405.9px;width:269.0px;height:16.6px;background:#efefef;border-top:1.2px solid #c4c4c4;border-left:1.2px solid #c8c8c8;border-bottom:1px solid #fbfbfb"></div><div class="a" style="left:564.5px;top:412.4px;width:0;height:0;border-left:4px solid transparent;border-right:4px solid transparent;border-top:4.2px solid #111"></div><div class="a" style="left:167.5px;top:451.0px;width:120.0px;text-align:right;white-space:nowrap;font-size:8.5px;line-height:11px;color:#000;-webkit-text-stroke:0.12px #000">Font:</div><div class="a" style="left:292.4px;top:427.5px;width:269.0px;height:57.2px;background:#efefef;border-top:1.2px solid #c4c4c4;border-left:1.2px solid #c8c8c8;border-bottom:1px solid #fbfbfb"></div><div class="a" style="left:564.5px;top:454.3px;width:0;height:0;border-left:4px solid transparent;border-right:4px solid transparent;border-top:4.2px solid #111"></div><div class="a" style="left:585.2px;top:67.3px;width:46.8px;height:18.0px;border:1.4px solid #505050;background:#eeeeee;box-shadow:inset 1px 1px 0 #fff"></div><div class="a" style="left:585.2px;top:71.7px;width:46.8px;text-align:center;white-space:nowrap;font-size:8.5px;line-height:11px;color:#000;-webkit-text-stroke:0.12px #000">Ok</div><div class="a" style="left:585.2px;top:88.2px;width:46.8px;height:17.4px;border:1px solid #8e8e8e;background:#eeeeee;box-shadow:inset 1px 1px 0 #fff"></div><div class="a" style="left:585.2px;top:92.3px;width:46.8px;text-align:center;white-space:nowrap;font-size:8.5px;line-height:11px;color:#000;-webkit-text-stroke:0.12px #000">Cancel</div><div class="a" style="left:585.2px;top:109.0px;width:46.8px;height:17.4px;border:1px solid #8e8e8e;background:#eeeeee;box-shadow:inset 1px 1px 0 #fff"></div><div class="a" style="left:585.2px;top:113.1px;width:46.8px;text-align:center;white-space:nowrap;font-size:8.5px;line-height:11px;color:#000;-webkit-text-stroke:0.12px #000">Apply</div><div class="a" style="left:585.2px;top:134.3px;width:46.8px;height:18.1px;border:1px solid #8e8e8e;background:#eeeeee;box-shadow:inset 1px 1px 0 #fff"></div><div class="a" style="left:585.2px;top:138.8px;width:46.8px;text-align:center;white-space:nowrap;font-size:8.5px;line-height:11px;color:#000;-webkit-text-stroke:0.12px #000">Remove</div><div class="a" style="left:819.6px;top:185.9px;width:136.4px;height:161.6px;background:#f0f0f0;border:1px solid #8a8a8a;box-shadow:1.6px 1.6px 1.2px rgba(0,0,0,0.5)"></div><div class="a" style="left:842.2px;top:188px;width:1px;height:159px;background:#e2e3e3;border-right:1px solid #fff"></div><div class="a" style="left:822.4px;top:206.3px;width:131.4px;height:16.5px;border:1px solid #a8cbf0;border-radius:2px;background:linear-gradient(#f1f7fe,#dfecfa)"></div><div class="a" style="left:847.5px;top:191.7px;font-size:9.3px;line-height:12px;color:#000;-webkit-text-stroke:0.12px #000;white-space:nowrap">Settings</div><div class="a" style="left:847.5px;top:209.2px;font-size:9.3px;line-height:12px;color:#000;-webkit-text-stroke:0.12px #000;white-space:nowrap">Appearance</div><div class="a" style="left:847.5px;top:226.8px;font-size:9.3px;line-height:12px;color:#000;-webkit-text-stroke:0.12px #000;white-space:nowrap">Tools</div><div class="a" style="left:847.5px;top:244.3px;font-size:9.3px;line-height:12px;color:#000;-webkit-text-stroke:0.12px #000;white-space:nowrap">Reprobe</div><div class="a" style="left:847.5px;top:261.9px;font-size:9.3px;line-height:12px;color:#000;-webkit-text-stroke:0.12px #000;white-space:nowrap">Ack</div><div class="a" style="left:847.5px;top:279.5px;font-size:9.3px;line-height:12px;color:#000;-webkit-text-stroke:0.12px #000;white-space:nowrap">Unack</div><div class="a" style="left:847.5px;top:297.0px;font-size:9.3px;line-height:12px;color:#000;-webkit-text-stroke:0.12px #000;white-space:nowrap">Notes</div><div class="a" style="left:847.5px;top:314.6px;font-size:9.3px;line-height:12px;color:#000;-webkit-text-stroke:0.12px #000;white-space:nowrap">Remove</div><div class="a" style="left:847.5px;top:332.1px;font-size:9.3px;line-height:12px;color:#000;-webkit-text-stroke:0.12px #000;white-space:nowrap">Select Adjacent</div><svg class="a" style="left:823px;top:195px" width="16" height="8" viewBox="0 0 16 8"><g fill="none" stroke="#222" stroke-width="1"><circle cx="3.8" cy="4" r="1.5"/><circle cx="7.9" cy="4" r="1.5"/><circle cx="12" cy="4" r="1.5"/></g></svg><svg class="a" style="left:822.5px;top:224.5px" width="15" height="15" viewBox="0 0 15 15"><path d="M7.5 7.5 L12 12" stroke="#e8900c" stroke-width="3" stroke-linecap="round"/><circle cx="5.6" cy="5.6" r="3.8" fill="#e8ecf0" stroke="#9aa0a8" stroke-width="1"/><path d="M3.5 4.5 A2.5 2.5 0 0 1 6.5 3" stroke="#fff" stroke-width="1" fill="none"/></svg><div class="a" style="left:941.5px;top:229px;width:0;height:0;border-top:3.5px solid transparent;border-bottom:3.5px solid transparent;border-left:3.8px solid #222"></div><svg class="a" style="left:824.5px;top:298.5px" width="12" height="9" viewBox="0 0 12 9"><path d="M0.8 3 L3 0.8 L10.8 0.8 L10.8 8.2 L0.8 8.2 Z" fill="#f4f000" stroke="#111" stroke-width="1.1"/></svg><div class="a" style="left:825.6px;top:318.6px;width:9.6px;height:3.6px;background:#0a14d0;border:1px solid #101040"></div></body></html>
